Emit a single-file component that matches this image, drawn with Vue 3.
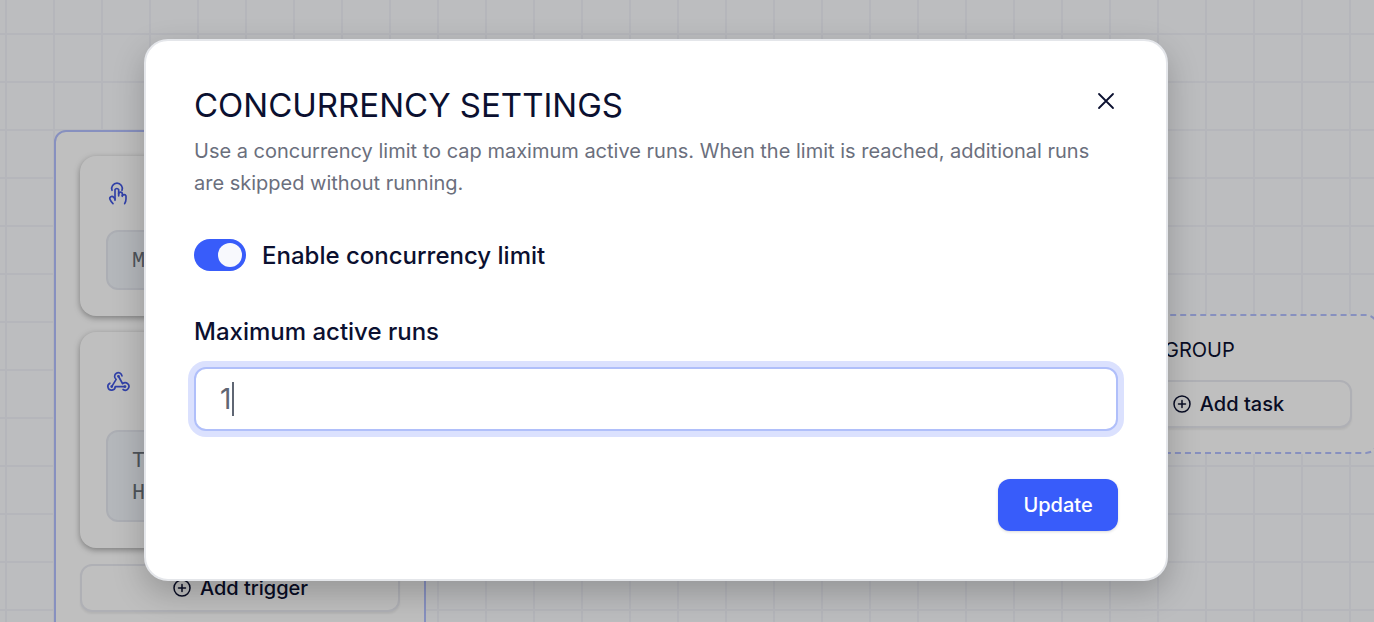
<template>
    <div class="editor">
        <section class="group triggers">
            <div v-for="trigger in triggers" :key="trigger.icon" class="card">
                <div class="card-header" :class="trigger.icon">
                    <svg v-if="trigger.icon === 'tap'" class="card-icon" viewBox="0 -2 72 72" aria-hidden="true">
                        <path d="M18 23A16 16 0 1 1 48 23" />
                        <path d="M27 53V21a6 6 0 0 1 11 0v19" />
                        <path d="M38 34a5 5 0 0 1 11 0v7" />
                        <path d="M49 39a6 6 0 0 1 11 1v9q0 7-4 14" />
                        <path d="M27 49l-4-5c-5-6-14-1-11 6q3 7 9 13" />
                    </svg>
                    <svg v-else class="card-icon" viewBox="-1 0 26 26" aria-hidden="true">
                        <path d="M3.200 14.300A4 4 0 1 0 9 18H20" />
                        <path d="M17.500 21.100A4 4 0 1 0 17 14.900L12.500 6.800" />
                        <path d="M16.300 6.400A4 4 0 1 0 10 10.200L5.200 18" />
                        <path class="dot" d="M12.500 6.800h.01M5.200 18h.01M19.500 18h.01" />
                    </svg>
                </div>
                <div class="snippet">
                    <div v-for="line in trigger.lines" :key="line">{{ line }}</div>
                </div>
            </div>
            <button type="button" class="add-btn">
                <svg viewBox="0 0 20 20" aria-hidden="true">
                    <circle cx="10" cy="10" r="8" />
                    <path d="M10 6.500v7M6.500 10h7" />
                </svg>
                Add trigger
            </button>
        </section>

        <section class="group tasks">
            <div class="group-title">GROUP</div>
            <button type="button" class="add-btn">
                <svg viewBox="0 0 20 20" aria-hidden="true">
                    <circle cx="10" cy="10" r="8" />
                    <path d="M10 6.500v7M6.500 10h7" />
                </svg>
                Add task
            </button>
        </section>

        <div class="overlay">
            <form class="dialog" role="dialog" aria-labelledby="dialog-title" @submit.prevent>
                <header class="dialog-header">
                    <h2 id="dialog-title">CONCURRENCY SETTINGS</h2>
                    <button type="button" class="close-btn" aria-label="Close">
                        <svg viewBox="0 0 24 24" aria-hidden="true">
                            <path d="M5 5l14 14M19 5L5 19" />
                        </svg>
                    </button>
                </header>
                <p class="description">
                    Use a concurrency limit to cap maximum active runs. When the limit is reached, additional runs are skipped without running.
                </p>
                <div class="switch-row">
                    <input id="enable-limit" v-model="enabled" type="checkbox" role="switch" class="switch">
                    <label for="enable-limit">Enable concurrency limit</label>
                </div>
                <label for="max-runs">Maximum active runs</label>
                <div class="field">
                    <input id="max-runs" v-model="maxRuns" type="text" inputmode="numeric" :disabled="!enabled">
                    <span class="caret"></span>
                </div>
                <footer class="dialog-footer">
                    <button type="submit" class="update-btn">Update</button>
                </footer>
            </form>
        </div>
    </div>
</template>

<script setup>
import { ref } from 'vue'

const enabled = ref(true)
const maxRuns = ref('1')

const triggers = [
    { icon: 'tap', lines: ['M'] },
    { icon: 'webhook', lines: ['T', 'H'] }
]
</script>

<style>
body {
    margin: 0;
}
</style>

<style scoped>
.editor {
    position: relative;
    box-sizing: border-box;
    height: 100vh;
    overflow: hidden;
    color: #0b1030;
    font-family: Inter, "Liberation Sans", sans-serif;
    background-color: #fbfcff;
    background-image:
        linear-gradient(#f2f3fa 2px, transparent 2px),
        linear-gradient(90deg, #f2f3fa 2px, transparent 2px);
    background-size: 48px 48px;
    background-position: 5px 33px;
}

button,
input {
    font-family: inherit;
}

/* Workflow nodes */
.group {
    position: absolute;
    display: flex;
    flex-direction: column;
    gap: 16px;
    box-sizing: border-box;
    padding: 24px;
    border: 2px solid #b4c0ff;
    border-radius: 12px;
    background: #fff;
}

.triggers {
    top: 130px;
    left: 54px;
    width: 372px;
}

.tasks {
    top: 314px;
    left: 1078px;
    width: 300px;
    gap: 20px;
    border-style: dashed;
}

.group-title {
    padding-left: 60px;
    font-size: 20px;
    line-height: 20px;
}

.card {
    display: flex;
    flex-direction: column;
    gap: 24px;
    padding: 26px;
    border-radius: 16px;
    background: #fff;
    box-shadow: 0 2px 6px rgba(0, 0, 0, 0.35);
}

.card-header {
    display: flex;
    align-items: center;
    height: 24px;
}

.card-header.webhook {
    height: 48px;
}

.card-icon {
    width: 24px;
    height: 24px;
    fill: none;
    stroke: #4257e0;
    stroke-width: 5;
    stroke-linecap: round;
    stroke-linejoin: round;
}

.webhook .card-icon {
    stroke-width: 1.8;
}

.webhook .dot {
    stroke-width: 3;
}

.snippet {
    padding: 14px 24px 10px;
    border: 2px solid #e6e9f0;
    border-radius: 12px;
    background: #f0f5fa;
    color: #6a7078;
    font-family: "Liberation Mono", monospace;
    font-size: 22px;
    line-height: 32px;
}

.add-btn {
    display: flex;
    align-items: center;
    justify-content: center;
    gap: 8px;
    height: 48px;
    padding: 0;
    border: 2px solid #eaebf2;
    border-radius: 12px;
    background: #fff;
    box-shadow: 0 2px 2px rgba(0, 0, 0, 0.06);
    color: inherit;
    font-size: 20px;
    font-weight: 500;
}

.add-btn svg {
    width: 20px;
    height: 20px;
    fill: none;
    stroke: currentColor;
    stroke-width: 1.5;
    stroke-linecap: round;
}

/* Dialog */
.overlay {
    position: absolute;
    inset: 0;
    display: flex;
    align-items: center;
    justify-content: center;
    padding: 0 62px 2px 0;
    background: rgba(0, 0, 0, 0.25);
}

.dialog {
    display: flex;
    flex-direction: column;
    box-sizing: border-box;
    width: 100%;
    max-width: 1024px;
    padding: 48px;
    border: 2px solid #e4e6ea;
    border-radius: 24px;
    background: #fff;
    box-shadow: 0 12px 32px rgba(0, 0, 0, 0.22);
}

.dialog-header {
    display: flex;
    align-items: flex-start;
    justify-content: space-between;
}

h2 {
    margin: 0;
    font-size: 33px;
    font-weight: 400;
    line-height: 32px;
}

.close-btn {
    display: flex;
    padding: 0;
    border: 0;
    background: none;
    color: inherit;
}

.close-btn svg {
    width: 24px;
    height: 24px;
    fill: none;
    stroke: currentColor;
    stroke-width: 1.8;
    stroke-linecap: round;
}

.description {
    margin: 14px 0 40px;
    color: #6b6f7d;
    font-size: 20px;
    line-height: 32px;
}

.switch-row {
    display: flex;
    align-items: center;
    gap: 16px;
    margin-bottom: 44px;
}

label {
    padding-top: 2px;
    font-size: 24px;
    font-weight: 500;
    line-height: 30px;
}

.switch {
    appearance: none;
    display: flex;
    align-items: center;
    justify-content: flex-start;
    box-sizing: border-box;
    width: 52px;
    height: 32px;
    margin: 0;
    padding: 4px;
    border-radius: 16px;
    background: #c8ccd8;
}

.switch::before {
    content: "";
    width: 24px;
    height: 24px;
    border-radius: 50%;
    background: #f8f9fd;
}

.switch:checked {
    justify-content: flex-end;
    background: #385cfa;
}

.field {
    position: relative;
    display: flex;
    margin: 20px 0 48px;
}

.field input {
    flex: 1;
    box-sizing: border-box;
    min-width: 0;
    height: 64px;
    padding: 0 24px;
    border: 2px solid #b0bffa;
    border-radius: 12px;
    outline: none;
    background: #fff;
    box-shadow: 0 0 0 6px #dbe1fe;
    color: #5f6673;
    font-size: 28px;
}

.caret {
    position: absolute;
    top: 15px;
    left: 38px;
    width: 2px;
    height: 34px;
    background: #5f6673;
}

.dialog-footer {
    display: flex;
    justify-content: flex-end;
}

.update-btn {
    min-width: 120px;
    height: 52px;
    padding: 0 24px;
    border: 0;
    border-radius: 12px;
    background: #385cfa;
    box-shadow: 0 1px 3px rgba(0, 0, 0, 0.15);
    color: #fff;
    font-size: 20px;
    font-weight: 500;
}
</style>
